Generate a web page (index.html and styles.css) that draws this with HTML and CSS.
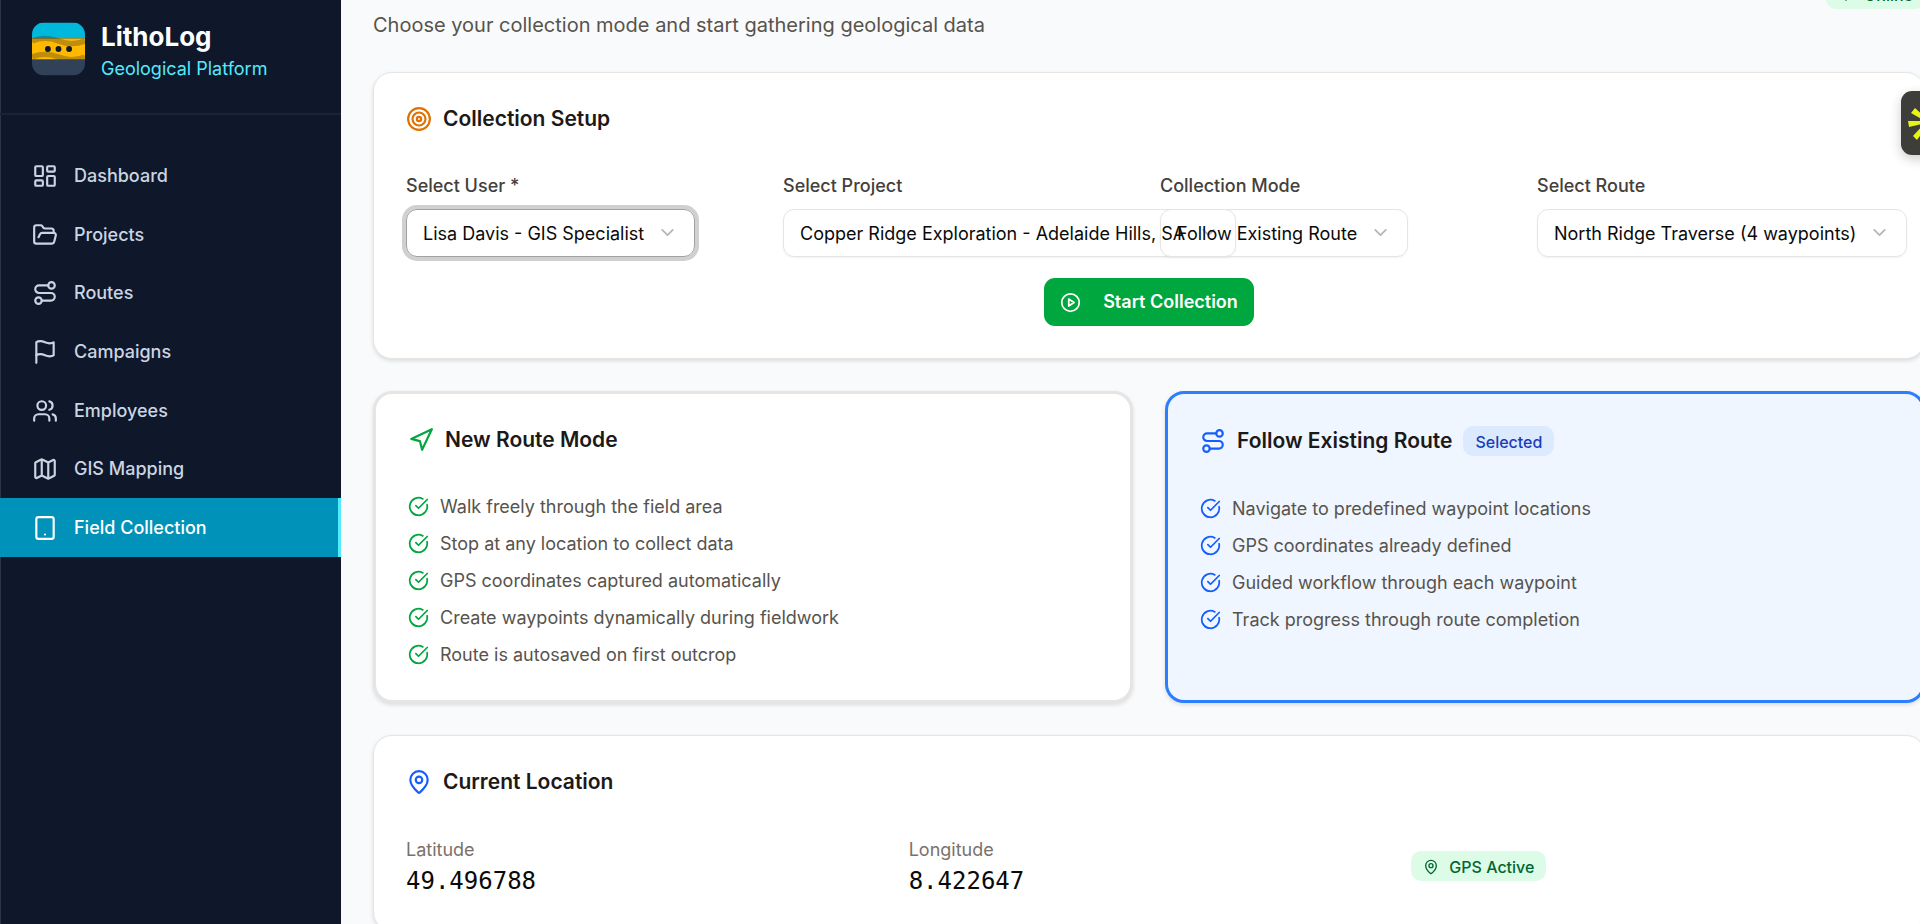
FILE: index.html
```html
<!DOCTYPE html>
<html lang="en">
<head>
  <meta charset="UTF-8">
  <title>LithoLog - Field Collection</title>
  <link rel="stylesheet" href="styles.css">
</head>
<body>

<!-- shared icons -->
<svg class="sprite" aria-hidden="true">
  <symbol id="i-check" viewBox="0 0 24 24"><path d="M21.8 10A10 10 0 1 1 17 3.34"/><path d="m9 11 3 3L22 4"/></symbol>
  <symbol id="i-route" viewBox="0 0 24 24"><circle cx="6" cy="19" r="3"/><path d="M9 19h8.5a3.5 3.5 0 0 0 0-7h-11a3.5 3.5 0 0 1 0-7H15"/><circle cx="18" cy="5" r="3"/></symbol>
  <symbol id="i-pin" viewBox="0 0 24 24"><path d="M20 10c0 5-5.54 10.19-7.4 11.8a1 1 0 0 1-1.2 0C9.54 20.19 4 15 4 10a8 8 0 0 1 16 0"/><circle cx="12" cy="10" r="3"/></symbol>
  <symbol id="i-down" viewBox="0 0 24 24"><path d="m6 9 6 6 6-6"/></symbol>
</svg>

<aside class="sidebar">
  <div class="brand">
    <svg class="logo" viewBox="0 0 40 40">
      <clipPath id="logo-clip"><rect width="40" height="40" rx="9"/></clipPath>
      <g clip-path="url(#logo-clip)">
        <rect width="40" height="12" fill="#00b8db"/>
        <rect y="12" width="40" height="16" fill="#ffb900"/>
        <path d="M0 14Q10 10 20 14T40 14" fill="none" stroke="#0f172b" stroke-opacity=".27" stroke-width="4"/>
        <path d="M0 26Q10 22 20 26T40 26" fill="none" stroke="#0f172b" stroke-opacity=".27" stroke-width="4"/>
        <rect y="28" width="40" height="12" fill="#314158"/>
        <circle cx="12" cy="20" r="2.2" fill="#0f172b"/>
        <circle cx="20" cy="20" r="2.2" fill="#0f172b"/>
        <circle cx="28" cy="20" r="2.2" fill="#0f172b"/>
      </g>
    </svg>
    <div>
      <div class="brand-name">LithoLog</div>
      <div class="brand-sub">Geological Platform</div>
    </div>
  </div>
  <nav class="menu">
    <a href="#"><svg class="icon" viewBox="0 0 24 24"><rect x="3" y="3" width="7" height="9" rx="1"/><rect x="14" y="3" width="7" height="5" rx="1"/><rect x="14" y="12" width="7" height="9" rx="1"/><rect x="3" y="16" width="7" height="5" rx="1"/></svg>Dashboard</a>
    <a href="#"><svg class="icon" viewBox="0 0 24 24"><path d="m6 14 1.5-2.9A2 2 0 0 1 9.24 10H20a2 2 0 0 1 1.94 2.5l-1.54 6a2 2 0 0 1-1.95 1.5H4a2 2 0 0 1-2-2V5a2 2 0 0 1 2-2h3.9a2 2 0 0 1 1.69.9l.81 1.2a2 2 0 0 0 1.67.9H18a2 2 0 0 1 2 2v2"/></svg>Projects</a>
    <a href="#"><svg class="icon"><use href="#i-route"/></svg>Routes</a>
    <a href="#"><svg class="icon" viewBox="0 0 24 24"><path d="M4 15s1-1 4-1 5 2 8 2 4-1 4-1V3s-1 1-4 1-5-2-8-2-4 1-4 1z"/><path d="M4 22v-7"/></svg>Campaigns</a>
    <a href="#"><svg class="icon" viewBox="0 0 24 24"><path d="M16 21v-2a4 4 0 0 0-4-4H6a4 4 0 0 0-4 4v2"/><circle cx="9" cy="7" r="4"/><path d="M22 21v-2a4 4 0 0 0-3-3.87"/><path d="M16 3.13a4 4 0 0 1 0 7.75"/></svg>Employees</a>
    <a href="#"><svg class="icon" viewBox="0 0 24 24"><path d="M14.1 5.55a2 2 0 0 0 1.8 0l3.65-1.83A1 1 0 0 1 21 4.62v12.76a1 1 0 0 1-.55.9l-4.55 2.27a2 2 0 0 1-1.8 0l-4.2-2.1a2 2 0 0 0-1.8 0l-3.65 1.83A1 1 0 0 1 3 19.38V6.62a1 1 0 0 1 .55-.9L8.1 3.45a2 2 0 0 1 1.8 0z"/><path d="M15 5.76v15"/><path d="M9 3.24v15"/></svg>GIS Mapping</a>
    <a href="#" class="active"><svg class="icon" viewBox="0 0 24 24"><rect x="4" y="2" width="16" height="20" rx="2"/><path d="M12 18h.01"/></svg>Field Collection</a>
  </nav>
</aside>

<main class="main">
  <header class="page-head">
    <p class="lead">Choose your collection mode and start gathering geological data</p>
    <span class="badge green"><svg class="icon" viewBox="0 0 24 24"><path d="M12 20h.01"/><path d="M2 8.82a15 15 0 0 1 20 0"/><path d="M5 12.86a10 10 0 0 1 14 0"/><path d="M8.5 16.43a5 5 0 0 1 7 0"/></svg>Online</span>
  </header>

  <section class="card">
    <h2 class="card-title"><svg class="icon orange" viewBox="0 0 24 24"><circle cx="12" cy="12" r="10"/><circle cx="12" cy="12" r="6"/><circle cx="12" cy="12" r="2"/></svg>Collection Setup</h2>
    <form class="fields">
      <div class="field">
        <label for="user">Select User *</label>
        <div class="select focus">
          <select id="user"><option>Lisa Davis - GIS Specialist</option></select>
          <svg class="icon"><use href="#i-down"/></svg>
        </div>
      </div>
      <div class="field">
        <label for="project">Select Project</label>
        <div class="select">
          <select id="project"><option>Copper Ridge Exploration - Adelaide Hills, SA</option></select>
          <svg class="icon"><use href="#i-down"/></svg>
        </div>
      </div>
      <div class="field">
        <label for="mode">Collection Mode</label>
        <div class="select">
          <select id="mode"><option>Follow Existing Route</option></select>
          <svg class="icon"><use href="#i-down"/></svg>
        </div>
      </div>
      <div class="field">
        <label for="route">Select Route</label>
        <div class="select">
          <select id="route"><option>North Ridge Traverse (4 waypoints)</option></select>
          <svg class="icon"><use href="#i-down"/></svg>
        </div>
      </div>
    </form>
    <div class="actions">
      <button type="button" class="start"><svg class="icon" viewBox="0 0 24 24"><circle cx="12" cy="12" r="10"/><path d="m10 8 6 4-6 4z"/></svg>Start Collection</button>
    </div>
  </section>

  <div class="modes">
    <section class="card mode">
      <h2 class="card-title"><svg class="icon" viewBox="0 0 24 24"><path d="m3 11 19-9-9 19-2-8z"/></svg>New Route Mode</h2>
      <ul>
        <li><svg class="icon"><use href="#i-check"/></svg>Walk freely through the field area</li>
        <li><svg class="icon"><use href="#i-check"/></svg>Stop at any location to collect data</li>
        <li><svg class="icon"><use href="#i-check"/></svg>GPS coordinates captured automatically</li>
        <li><svg class="icon"><use href="#i-check"/></svg>Create waypoints dynamically during fieldwork</li>
        <li><svg class="icon"><use href="#i-check"/></svg>Route is autosaved on first outcrop</li>
      </ul>
    </section>
    <section class="card mode selected">
      <h2 class="card-title"><svg class="icon"><use href="#i-route"/></svg>Follow Existing Route <span class="badge blue">Selected</span></h2>
      <ul>
        <li><svg class="icon"><use href="#i-check"/></svg>Navigate to predefined waypoint locations</li>
        <li><svg class="icon"><use href="#i-check"/></svg>GPS coordinates already defined</li>
        <li><svg class="icon"><use href="#i-check"/></svg>Guided workflow through each waypoint</li>
        <li><svg class="icon"><use href="#i-check"/></svg>Track progress through route completion</li>
      </ul>
    </section>
  </div>

  <section class="card">
    <h2 class="card-title"><svg class="icon pin"><use href="#i-pin"/></svg>Current Location</h2>
    <div class="location">
      <div>
        <div class="coord-label">Latitude</div>
        <div class="coord">49.496788</div>
      </div>
      <div>
        <div class="coord-label">Longitude</div>
        <div class="coord">8.422647</div>
      </div>
      <div><span class="badge green"><svg class="icon"><use href="#i-pin"/></svg>GPS Active</span></div>
    </div>
  </section>
</main>

<button type="button" class="widget" aria-label="Open assistant">
  <svg viewBox="0 0 40 40"><path d="M0 18L18 18L18 20L1 24ZM3 10L7 5L19 16L17 18ZM9 37L5 33L17 20L20 22ZM18 0L24 0L22 17L20 17ZM18 40L24 40L22 22L20 22Z"/></svg>
</button>

</body>
</html>
```
FILE: styles.css
```css
*{box-sizing:border-box;}
body,h2,p,ul{margin:0;padding:0;}
ul{list-style-type:none;}
body{display:flex;min-height:100vh;overflow:hidden;background:#f9fafb;color:#0a0a0a;font:18px/28px Inter,"Liberation Sans",sans-serif;}
.sprite{position:absolute;width:0;height:0;}
.icon{flex:none;width:26px;height:26px;fill:none;stroke:currentColor;stroke-width:2;stroke-linecap:round;stroke-linejoin:round;}

/* sidebar */
.sidebar{flex:none;width:341px;background:#0f172b;box-shadow:inset 1px 0 #2b3346;}
.brand{display:flex;gap:16px;height:115px;padding:22px 32px;border-bottom:2px solid #1a2438;}
.logo{width:53px;height:54px;}
.brand-name{color:#fff;font-size:26px;line-height:30px;font-weight:700;}
.brand-sub{color:#53eafd;line-height:34px;}
.menu{display:grid;grid-auto-rows:1fr;min-height:411px;margin-top:31px;}
.menu a{display:flex;align-items:center;gap:16px;padding:1px 32px 0;color:#cad5e2;font-weight:500;text-decoration:none;}
.menu .active{background:#0092b8;color:#fff;border-right:3px solid #53eafd;}

/* content is a little wider than the window, the rest is clipped */
.main{flex:1;min-width:0;margin-right:-37px;padding:0 32px 32px;}
.page-head{display:flex;align-items:center;justify-content:space-between;height:92px;margin-top:-52px;}
.lead{align-self:flex-end;color:#57534d;font-size:20px;line-height:30px;}
.card{margin-top:32px;padding:32px;background:#fff;border:1px solid #e7e5e4;border-radius:19px;box-shadow:0 2px 4px rgba(0,0,0,.12);}
.card-title{display:flex;align-items:center;gap:11px;margin-bottom:40px;color:#1c1917;font-size:21px;line-height:28px;font-weight:600;}
.orange{color:#e17100;}
.pin{color:#155dfc;}

.badge{display:inline-flex;align-items:center;height:30px;padding:2px 12px 0;border-radius:10px;font-size:16px;font-weight:500;}
.badge .icon{width:16px;height:16px;margin-right:10px;}
.green{background:#dcfce7;color:#016630;}
.blue{background:#dbeafe;color:#193cb8;}

.fields{display:grid;grid-template-columns:repeat(4,minmax(0,1fr));gap:22px;}
.field label{display:block;margin-bottom:10px;color:#44403b;line-height:26px;font-weight:500;}
.select{position:relative;width:max-content;}
.select select{appearance:none;height:48px;padding:1px 49px 0 16px;border:1px solid #e5e5e5;border-radius:11px;background:transparent;box-shadow:0 1px 2px rgba(0,0,0,.06);color:#0a0a0a;font:inherit;}
.select .icon{position:absolute;right:17px;top:13px;width:21px;height:21px;color:#b5b5b5;pointer-events:none;}
.select.focus select{border-color:#a1a1a1;box-shadow:0 0 0 4px #d0d0d0;}

.actions{display:flex;justify-content:center;margin-top:21px;}
.start{display:flex;align-items:center;gap:22px;height:48px;padding:0 16px;border:0;border-radius:11px;background:#00a63e;color:#fff;font:inherit;font-weight:600;}
.start .icon{width:21px;height:21px;}

.modes{display:grid;grid-template-columns:1fr 1fr;gap:32px;}
.mode{border-width:3px;color:#57534d;}
.mode .card-title{margin-bottom:39px;}
.mode li{display:flex;align-items:center;gap:11px;line-height:27px;}
.mode li + li{margin-top:10px;}
.mode li .icon{width:21px;height:21px;}
.mode .icon{color:#00a63e;}
.selected{background:#eff6ff;border-color:#2b7fff;}
.selected .icon{color:#155dfc;}

.location{display:grid;grid-template-columns:repeat(3,1fr);gap:22px;align-items:center;}
.coord-label{color:#79716b;}
.coord{font:24px/34px "DejaVu Sans Mono",monospace;}

/* floating tab at the window edge */
.widget{position:fixed;top:91px;right:-45px;width:64px;height:64px;padding:0 7px;border:0;border-radius:11px;background:#3d3d3a;box-shadow:0 4px 12px rgba(0,0,0,.2);}
.widget svg{display:block;width:40px;height:40px;fill:#e8f510;}
```
